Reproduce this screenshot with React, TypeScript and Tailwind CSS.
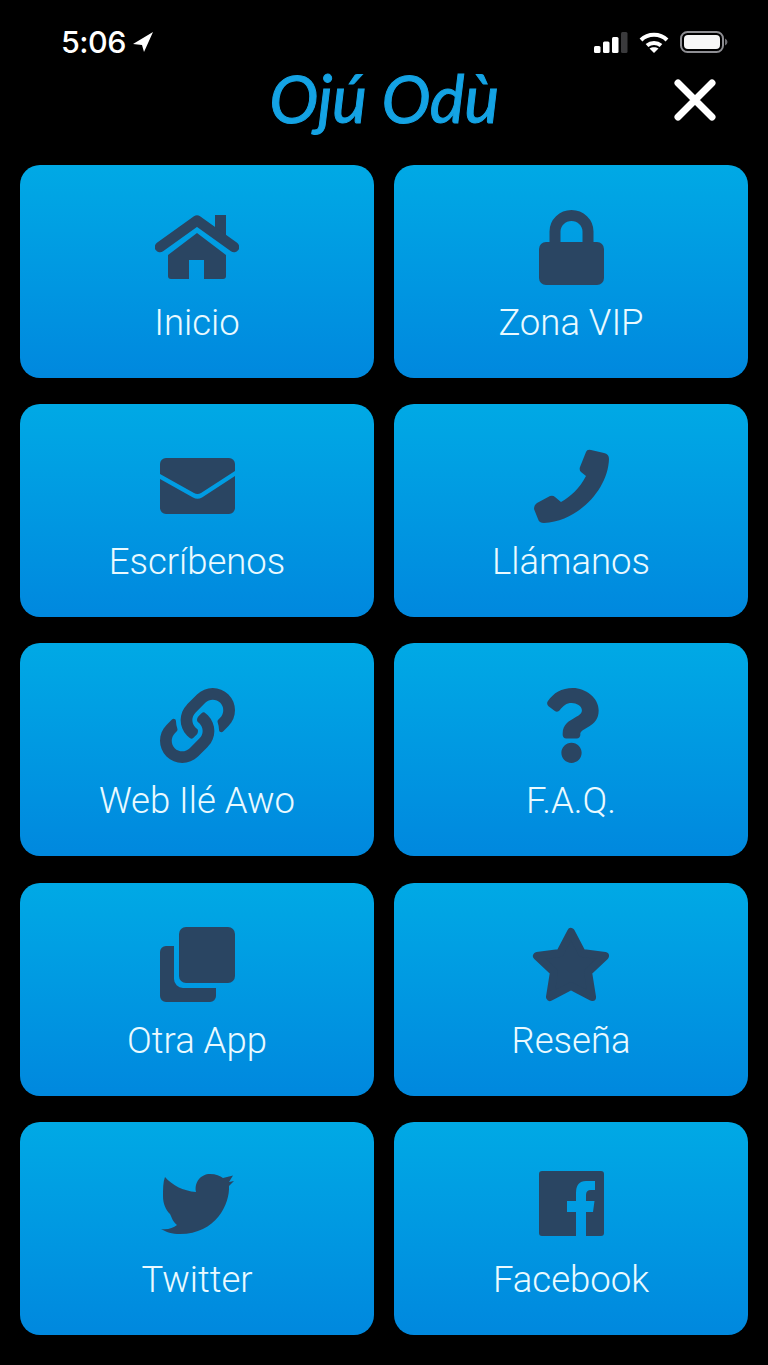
import React from 'react';
import { FaLink, FaQuestion } from 'react-icons/fa';

const HomeIcon = () => (
  <svg width="84" height="66" viewBox="0 0 84 66" fill="currentColor">
    <rect x="60" y="1" width="11" height="24" />
    <path d="M5 33 L42 6.500 L79 33" fill="none" stroke="currentColor" strokeWidth="10.500" strokeLinejoin="round" strokeLinecap="round" />
    <path d="M42 19 L71 41 V62 q0 3 -3 3 H49 V46 H34 V65 H16 q-3 0 -3 -3 V41 Z" />
  </svg>
);

const LockIcon = () => (
  <svg width="65" height="75" viewBox="0 0 65 75" fill="currentColor">
    <path d="M16 35 V21.500 a16.500 16 0 0 1 33 0 V35" fill="none" stroke="currentColor" strokeWidth="11" />
    <rect x="0" y="32" width="65" height="43" rx="7" />
  </svg>
);

const MailIcon = () => (
  <svg width="75" height="56" viewBox="0 0 75 56" fill="currentColor">
    <path d="M0 6 a6 6 0 0 1 6 -6 H69 a6 6 0 0 1 6 6 V13 L41 35 q-3.500 2 -7 0 L0 16 Z" />
    <path d="M0 21 L33 39.500 q4.500 2.500 9 0 L75 18 V50 a6 6 0 0 1 -6 6 H6 a6 6 0 0 1 -6 -6 Z" />
  </svg>
);

const PhoneIcon = () => (
  <svg width="75" height="74" viewBox="0 0 75 74" fill="currentColor">
    <path d="M52 3 Q53 0 57 1 L70 4 Q75 5 75 10 C74 40 45 72 10 74 Q5 74 4 70 L0 60 Q0 56 3 54 L16 47 Q19 46 21 48 L27 53 C36 48 46 39 52 27 L47 23 Q45 21 46 18 Z" />
  </svg>
);

const CloneIcon = () => (
  <svg width="75" height="75" viewBox="0 0 75 75" fill="currentColor">
    <path d="M14 19 V52 a9 9 0 0 0 9 9 H56 V69 a6 6 0 0 1 -6 6 H6 a6 6 0 0 1 -6 -6 V25 a6 6 0 0 1 6 -6 Z" />
    <rect x="19" y="0" width="56" height="56" rx="7" />
  </svg>
);

const StarIcon = () => (
  <svg width="78" height="75" viewBox="0 0 78 75" fill="currentColor">
    <path
      d="M39 5 L50 26 L73 29 L56 45 L60 70 L39 59 L18 70 L22 45 L5 29 L28 26 Z"
      stroke="currentColor"
      strokeWidth="8"
      strokeLinejoin="round"
    />
  </svg>
);

const TwitterIcon = () => (
  <svg width="73" height="60" viewBox="0 0 73 60" fill="currentColor">
    <path d="M49 0 C55 0 59 2 62 4 L72 1.500 L68 8 L73 7 L68 12 C69 30 55 60 19 60 C11 60 5 58 0 55 C7 56 12 54 16 51 C12 48 11 44 9 40 C5 36 2 30 2 22 C2 15 2 8 4 3 C11 11 22 17 35 18 C33 8 40 0 49 0 Z" />
  </svg>
);

const FacebookIcon = () => (
  <svg width="65" height="65" viewBox="0 0 65 65" fill="currentColor">
    <path d="M3 0 H62 a3 3 0 0 1 3 3 V62 a3 3 0 0 1 -3 3 H47 V41 H54 L55.500 30 H47 V24 Q47 19 52 19 H56 V10 Q52 10 47 10 Q37 10 37 22 V30 H28 V41 H37 V65 H3 a3 3 0 0 1 -3 -3 V3 a3 3 0 0 1 3 -3 Z" />
  </svg>
);

const menuItems = [
  { label: 'Inicio', icon: <HomeIcon /> },
  { label: 'Zona VIP', icon: <LockIcon /> },
  { label: 'Escríbenos', icon: <MailIcon /> },
  { label: 'Llámanos', icon: <PhoneIcon /> },
  { label: 'Web Ilé Awo', icon: <FaLink size={75} /> },
  { label: 'F.A.Q.', icon: <FaQuestion size={75} /> },
  { label: 'Otra App', icon: <CloneIcon /> },
  { label: 'Reseña', icon: <StarIcon /> },
  { label: 'Twitter', icon: <TwitterIcon /> },
  { label: 'Facebook', icon: <FacebookIcon /> },
];

const StatusBar = () => (
  <div className="flex h-[62px] items-end justify-between pl-[61px] pr-[40px] text-white">
    <div className="flex items-center gap-[7px] pb-[2px]">
      <span className="text-[30.5px] leading-[36px] font-medium font-['Inter',sans-serif] tracking-[-0.5px]">5:06</span>
      <svg width="20" height="20" viewBox="0 0 20 20" fill="currentColor">
        <path d="M20 0 L11 20 L9 13 L0 12 Z" />
      </svg>
    </div>
    <div className="flex items-center gap-[11px] pb-[9px]">
      <svg width="34" height="21" viewBox="0 0 34 21" fill="currentColor">
        <rect x="0" y="14" width="6.500" height="7" rx="1.500" />
        <rect x="9" y="9.500" width="6.500" height="11.500" rx="1.500" />
        <rect x="18" y="5" width="6.500" height="16" rx="1.500" />
        <rect x="27" y="0" width="6.500" height="21" rx="1.500" fill="#3a3a3c" />
      </svg>
      <svg width="30" height="21" viewBox="0 0 30 21" fill="none" stroke="currentColor" strokeWidth="4">
        <path d="M2 8 C9 1 21 1 28 8" />
        <path d="M8 13.500 C12 10 18 10 22 13.500" />
        <path d="M15 21 L10.500 16.500 C13 14.800 17 14.800 19.500 16.500 Z" fill="currentColor" stroke="none" />
      </svg>
      <svg width="48" height="22" viewBox="0 0 48 22" fill="none">
        <rect x="1" y="1" width="42" height="20" rx="6.500" stroke="#8e8e93" strokeWidth="2" />
        <rect x="4" y="4" width="36" height="14" rx="4" fill="#f7f7f7" />
        <path d="M45 7.500 q2.500 1 2.500 3.500 t-2.500 3.500 Z" fill="#6e6e73" />
      </svg>
    </div>
  </div>
);

export default function App() {
  return (
    <div className="h-[1365px] w-[768px] overflow-hidden bg-black">
      <StatusBar />
      <div className="relative flex h-[71px] items-center justify-center">
        <span className="text-[#14a3e4] text-[66px] leading-none italic font-['Lato',sans-serif] tracking-[-0.5px] [-webkit-text-stroke:1px_#14a3e4]">
          Ojú Odù
        </span>
        <button className="absolute right-[49px] top-[14px] text-white" aria-label="Cerrar">
          <svg width="48" height="48" viewBox="0 0 48 48" fill="none" stroke="currentColor" strokeWidth="7" strokeLinecap="round" className="block">
            <path d="M7 7 L41 41 M41 7 L7 41" />
          </svg>
        </button>
      </div>
      <div className="grid grid-cols-2 gap-x-5 gap-y-[26.2px] px-5 pt-8">
        {menuItems.map((item) => (
          <div
            key={item.label}
            className="flex h-[213px] flex-col items-center rounded-[20px] bg-gradient-to-b from-[#00a9e5] to-[#0088de] pt-[44px] text-[#2a4562]"
          >
            <div className="flex h-[76px] items-center justify-center">{item.icon}</div>
            <span className="mt-[16px] text-[36.5px] leading-[44px] font-light font-['Roboto',sans-serif] text-[#eafaff]">
              {item.label}
            </span>
          </div>
        ))}
      </div>
    </div>
  );
}
